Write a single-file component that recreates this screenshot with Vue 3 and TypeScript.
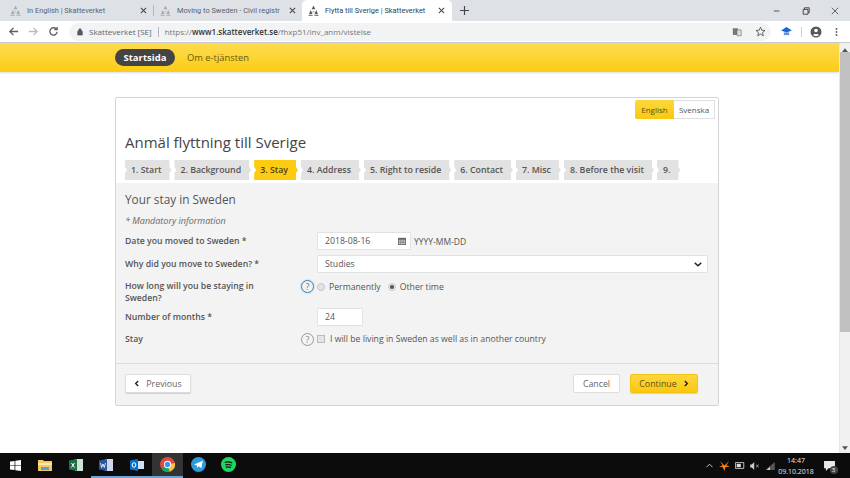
<script setup lang="ts">
interface Tab { title: string; active?: boolean }
const tabs: Tab[] = [
  { title: 'In English | Skatteverket' },
  { title: 'Moving to Sweden - Civil registr' },
  { title: 'Flytta till Sverige | Skatteverket', active: true },
]
const steps = ['1. Start', '2. Background', '3. Stay', '4. Address', '5. Right to reside', '6. Contact', '7. Misc', '8. Before the visit', '9.']
</script>

<template>
  <div class="screen">
    <div class="tabstrip">
      <div v-for="t in tabs" :key="t.title" class="tab" :class="{ active: t.active }">
        <svg class="fav" viewBox="0 0 12 12" width="11" height="11" :fill="t.active ? '#5f5a50' : '#a9a9a9'"><path d="M6 .5 8 4.500H4zM3 5.500 5 10H1zM9 5.500 11 10H7z"/><path d="M.5 10.800h4.500v1H.5zM7 10.800h4.500v1H7zM5 7h2v1H5z"/></svg>
        <span class="tab-title">{{ t.title }}</span>
        <svg class="tab-x" viewBox="0 0 8 8" width="7" height="7"><path d="M1 1l6 6M7 1 1 7" stroke="#45474a" stroke-width="1.200"/></svg>
      </div>
      <svg class="plus" viewBox="0 0 10 10" width="9" height="9"><path d="M5 0v10M0 5h10" stroke="#45474a" stroke-width="1.300"/></svg>
      <div class="winctl">
        <svg viewBox="0 0 10 10" width="8" height="8"><path d="M1 5h7" stroke="#444" stroke-width="1.100"/></svg>
        <svg viewBox="0 0 10 10" width="8" height="8"><path d="M1.500 3h6v6h-6zM3 3V1h6v6H7.500" fill="none" stroke="#444" stroke-width="1.200"/></svg>
        <svg viewBox="0 0 10 10" width="8" height="8"><path d="M1 1l8 8M9 1 1 9" stroke="#444" stroke-width="1"/></svg>
      </div>
    </div>

    <div class="toolbar">
      <svg viewBox="0 0 12 12" width="11" height="11"><path d="M11 6H2M6 2 2 6l4 4" fill="none" stroke="#5b5e62" stroke-width="1.400"/></svg>
      <svg viewBox="0 0 12 12" width="11" height="11"><path d="M1 6h9M6 2l4 4-4 4" fill="none" stroke="#b9bcc0" stroke-width="1.400"/></svg>
      <svg viewBox="0 0 12 12" width="11" height="11"><path d="M10 6.500A4 4 0 1 1 9 3.200M10 1v3H7" fill="none" stroke="#5b5e62" stroke-width="1.400"/></svg>
      <div class="omnibox">
        <svg viewBox="0 0 8 10" width="6" height="8"><path d="M1 4h6v5H1zM2.300 4V2.500a1.700 1.700 0 0 1 3.400 0V4" fill="#55585c" stroke="#55585c"/></svg>
        <span class="site">Skatteverket [SE]</span>
        <span class="sep"></span>
        <span class="url"><span class="dim">https://</span><b>www1.skatteverket.se</b><span class="dim">/fhxp51/inv_anm/vistelse</span></span>
        <span class="spacer"></span>
        <svg class="translate" viewBox="0 0 12 12" width="10" height="10"><path d="M1 1.500h6v8H1z" fill="#777"/><path d="M6 3.500h5v7H6z" fill="#ddd" stroke="#777" stroke-width=".8"/></svg>
        <svg class="star" viewBox="0 0 12 12" width="11" height="11"><path d="M6 1.300 7.400 4.600l3.500.3-2.700 2.300.8 3.500L6 8.800 3 10.700l.8-3.500L1.100 4.900l3.500-.3z" fill="none" stroke="#55585c"/></svg>
      </div>
      <svg class="ext" viewBox="0 0 12 10" width="11" height="9"><path d="M6 0 12 4 6 6 0 4z" fill="#1b66d1"/><path d="M3 6h6v3H3z" fill="#5b95e8"/></svg>
      <span class="tool-sep"></span>
      <svg viewBox="0 0 12 12" width="12" height="12"><circle cx="6" cy="6" r="5.500" fill="#55585c"/><circle cx="6" cy="4.500" r="1.800" fill="#fff"/><path d="M2.800 9c1-1.500 5.400-1.500 6.400 0-1.400 1.500-5 1.500-6.400 0z" fill="#fff"/></svg>
      <svg class="dots" viewBox="0 0 4 12" width="3" height="10"><circle cx="2" cy="2" r="1.200" fill="#55585c"/><circle cx="2" cy="6" r="1.200" fill="#55585c"/><circle cx="2" cy="10" r="1.200" fill="#55585c"/></svg>
    </div>

    <div class="viewport">
      <div class="page">
        <nav class="band">
          <span class="home">Startsida</span>
          <span class="about">Om e-tjänsten</span>
        </nav>

        <main class="card">
          <div class="card-top">
            <div class="lang">
              <span class="lang-on">English</span>
              <span class="lang-off">Svenska</span>
            </div>
            <h1>Anmäl flyttning till Sverige</h1>
            <ol class="steps">
              <li v-for="(s, i) in steps" :key="s" class="step" :class="{ current: i === 2 }">{{ s }}</li>
            </ol>
          </div>

          <section class="body">
            <h2>Your stay in Sweden</h2>
            <p class="mandatory">* Mandatory information</p>

            <div class="row r-date">
              <label>Date you moved to Sweden *</label>
              <span></span>
              <div class="ctl">
                <div class="input date">
                  <span>2018-08-16</span>
                  <svg viewBox="0 0 10 10" width="8" height="8"><path d="M0 1h10v9H0z" fill="#666"/><path d="M1 3.500h8v5.500H1z" fill="#cfcfcf"/><path d="M1 5.200h8M1 7h8M3.500 3.500V9M6.500 3.500V9" stroke="#666" stroke-width=".6"/></svg>
                </div>
                <span class="hint">YYYY-MM-DD</span>
              </div>
            </div>

            <div class="row r-why">
              <label>Why did you move to Sweden? *</label>
              <span></span>
              <div class="ctl">
                <div class="input select">
                  <span>Studies</span>
                  <svg viewBox="0 0 10 6" width="8" height="5"><path d="M1 1l4 3.500L9 1" fill="none" stroke="#222" stroke-width="1.800"/></svg>
                </div>
              </div>
            </div>

            <div class="row r-long">
              <label>How long will you be staying in Sweden?</label>
              <span class="help blue">?</span>
              <div class="ctl choices">
                <span class="radio"></span><span class="opt">Permanently</span>
                <span class="radio on"></span><span>Other time</span>
              </div>
            </div>

            <div class="row r-months">
              <label>Number of months *</label>
              <span></span>
              <div class="ctl"><div class="input months"><span>24</span></div></div>
            </div>

            <div class="row r-stay">
              <label>Stay</label>
              <span class="help">?</span>
              <div class="ctl choices">
                <span class="check"></span><span>I will be living in Sweden as well as in another country</span>
              </div>
            </div>

            <footer class="actions">
              <button class="btn prev">
                <svg viewBox="0 0 6 8" width="5" height="7"><path d="M5 1 2 4l3 3" fill="none" stroke="#222" stroke-width="1.700"/></svg>
                Previous
              </button>
              <span class="spacer"></span>
              <button class="btn cancel">Cancel</button>
              <button class="btn next">
                Continue
                <svg viewBox="0 0 6 8" width="5" height="7"><path d="M1 1l3 3-3 3" fill="none" stroke="#222" stroke-width="1.700"/></svg>
              </button>
            </footer>
          </section>
        </main>
      </div>
      <div class="scrollbar">
        <svg viewBox="0 0 8 5" width="6" height="4"><path d="M0 5 4 0l4 5z" fill="#555"/></svg>
        <div class="thumb"></div>
        <span class="spacer"></span>
        <svg viewBox="0 0 8 5" width="6" height="4"><path d="M0 0 4 5l4-5z" fill="#555"/></svg>
      </div>
    </div>

    <div class="taskbar">
      <svg class="win" viewBox="0 0 12 12" width="11" height="11"><path d="M0 1.700 5 1v4.600H0zM5.800.9 12 0v5.600H5.800zM0 6.400h5V11L0 10.300zM5.800 6.400H12V12l-6.200-.9z" fill="#fff"/></svg>
      <div class="tb-app"><svg viewBox="0 0 14 12" width="14" height="12"><path d="M0 1h5l1 1h8v10H0z" fill="#f5c95d"/><path d="M0 4h14v2H0z" fill="#fbe8a6"/><path d="M3 8h8v3H3z" fill="#4aa3df"/></svg></div>
      <div class="tb-app"><svg viewBox="0 0 14 14" width="14" height="14"><path d="M6 1h8v12H6z" fill="#cfe3d6"/><path d="M0 2.500 8 1v12L0 11.500z" fill="#1d7145"/><path d="M2.500 5l3 4.500M5.500 5l-3 4.500" stroke="#fff"/></svg></div>
      <div class="tb-app open"><svg viewBox="0 0 14 14" width="14" height="14"><path d="M6 1h8v12H6z" fill="#cdd8ee"/><path d="M0 2.500 8 1v12L0 11.500z" fill="#2b579a"/><path d="M1.500 5l1.200 4.500L4 6l1.300 3.500L6.500 5" stroke="#fff" stroke-width=".8" fill="none"/></svg></div>
      <div class="tb-app open"><svg viewBox="0 0 14 14" width="14" height="14"><path d="M5 3h9v8H5z" fill="#cde3f5"/><path d="M0 2.500 8 1v12L0 11.500z" fill="#0a72c6"/><ellipse cx="4" cy="7" rx="1.800" ry="2.300" fill="none" stroke="#fff"/></svg></div>
      <div class="tb-app open active"><svg viewBox="0 0 14 14" width="15" height="15"><circle cx="7" cy="7" r="7" fill="#dd4b3e"/><path d="M7 7 1.500 11A7 7 0 0 0 9 13.700z" fill="#1aa260"/><path d="M7 7 14 5.500A7 7 0 0 1 9 13.700z" fill="#f5c338"/><circle cx="7" cy="7" r="3.400" fill="#fff"/><circle cx="7" cy="7" r="2.500" fill="#4b8cf2"/></svg></div>
      <div class="tb-app"><svg viewBox="0 0 14 14" width="15" height="15"><circle cx="7" cy="7" r="7" fill="#2f9bd8"/><path d="M2.800 7 11 3.600 9.700 10.600 7 8.700 5.700 10 5.400 8z" fill="#fff"/></svg></div>
      <div class="tb-app"><svg viewBox="0 0 14 14" width="15" height="15"><circle cx="7" cy="7" r="7" fill="#1ed760"/><path d="M3.500 5c2.500-.7 5-.5 7 .7M4 7.300c2-.5 4-.4 6 .6M4.500 9.400c1.700-.4 3.300-.3 4.800.5" fill="none" stroke="#111" stroke-width="1.100"/></svg></div>
      <span class="spacer"></span>
      <div class="tray">
        <span class="tray-i"><svg viewBox="0 0 8 5" width="7" height="5"><path d="M.5 4.500 4 1l3.500 3.500" fill="none" stroke="#ddd"/></svg></span>
        <span class="tray-i"><svg viewBox="0 0 12 12" width="11" height="11"><path d="M6 6 1 1l3 5-4 1 4 1 2 4 1-4 5-1-4-1 3-5z" fill="#f5821f"/></svg></span>
        <span class="tray-i"><svg viewBox="0 0 12 8" width="10" height="7"><path d="M.5.500h10v7H.5z" fill="none" stroke="#ddd"/><path d="M2 2h5v4H2z" fill="#ddd"/></svg></span>
        <span class="tray-i"><svg viewBox="0 0 12 10" width="10" height="8"><path d="M0 3h2l3-3v10L2 7H0z" fill="#ccc"/><path d="M7.500 3.500l3 3M10.500 3.500l-3 3" stroke="#ccc"/></svg></span>
        <span class="tray-i"><svg viewBox="0 0 12 10" width="10" height="8"><path d="M12 0v10H0z" fill="#555"/><path d="M6 6v4H2z" fill="#ccc"/></svg></span>
        <div class="clock"><span>14:47</span><span>09.10.2018</span></div>
        <div class="notify">
          <svg viewBox="0 0 12 11" width="11" height="10"><path d="M0 0h12v8H5L2 11V8H0z" fill="#e8e8e8"/></svg>
          <span class="badge">3</span>
        </div>
      </div>
    </div>
  </div>
</template>

<style>
html, body { margin: 0; padding: 0; background: #fff; overflow: hidden; }
</style>

<style scoped>
.screen { width: 850px; height: 478px; display: flex; flex-direction: column; overflow: hidden; font-family: "Open Sans", "Liberation Sans", sans-serif; color: #555; }
.spacer { flex: 1; }

.tabstrip { height: 21px; background: #dee1e6; display: flex; align-items: center; padding-left: 5px; flex: none; }
.tab { width: 148px; height: 21px; box-sizing: border-box; padding: 0 6px 0 5px; display: flex; align-items: center; gap: 6px; font-family: Roboto, "Open Sans", sans-serif; font-size: 7.400px; color: #5f6368; }
.tab:nth-child(2) { width: 149px; position: relative; padding-left: 7px; }
.tab:nth-child(2)::before { content: ""; position: absolute; left: 0; top: 5px; width: 1px; height: 11px; background: #b3b6bb; }
.tab.active { background: #fff; color: #3c4043; border-radius: 5px 5px 0 0; width: 150px; padding-right: 7px; padding-left: 6px; }
.tab-title { flex: 1; white-space: nowrap; }
.plus { margin-left: 8px; }
.winctl { margin-left: auto; display: flex; gap: 21px; padding-right: 11px; }

.toolbar { height: 22px; flex: none; background: #fff; border-bottom: 1px solid #c9cbcf; box-sizing: border-box; display: flex; align-items: center; padding: 0 6px 0 8px; }
.toolbar > svg:nth-child(2) { margin-left: 9px; }
.toolbar > svg:nth-child(3) { margin-left: 9px; }
.omnibox { margin-left: 10px; width: 702px; height: 18px; border-radius: 9px; background: #f1f3f4; display: flex; align-items: center; padding: 0 5px 0 8px; box-sizing: border-box; font-size: 8px; color: #3c4043; flex: none; }
.site { margin-left: 6px; color: #5f6368; }
.sep { width: 1px; height: 10px; background: #b5b7ba; margin: 0 6px; }
.dim { color: #777; }
.url b { font-weight: 600; color: #333; }
.translate { margin-right: 13px; }
.ext { margin-left: 10px; }
.tool-sep { width: 1px; height: 10px; background: #d0d2d5; margin: 0 8px 0 9px; }
.dots { margin-left: 13px; }

.viewport { flex: 1; display: flex; min-height: 0; overflow: hidden; }
.page { flex: 1; min-width: 0; background: #fff; }
.scrollbar { width: 10px; background: #f1f1f1; border-left: 1px solid #e8e8e8; box-sizing: content-box; display: flex; flex-direction: column; align-items: center; padding: 5px 0 3px; }
.thumb { width: 10px; height: 280px; margin-top: 0; background: #c1c1c1; }

.band { height: 29px; background: linear-gradient(#fedb50, #fbcd14); display: flex; align-items: center; padding-left: 115px; box-shadow: 0 1px 2px rgba(0,0,0,.15); }
.home { background: #444; color: #fff; font-weight: 700; border-radius: 9px; padding: 2px 8.500px; line-height: 13px; font-size: 9.500px; margin-top: -1px; }
.about { margin-left: 12px; color: #6b5a10; font-size: 9.400px; margin-top: -1px; }

.card { width: 604px; height: 309px; box-sizing: border-box; margin: 25px 0 0 115px; border: 1px solid #d5d5d5; border-radius: 2px; display: flex; flex-direction: column; background: #fff; }
.card-top { height: 85px; flex: none; position: relative; padding: 33px 0 0 9px; box-sizing: border-box; }
.lang { position: absolute; top: 2px; right: 3px; display: flex; font-size: 8px; height: 19px; line-height: 19px; }
.lang-on { width: 39px; text-align: center; background: linear-gradient(#fdd73f, #fbc80f); color: #5c4d10; border-radius: 2px 0 0 2px; }
.lang-off { width: 41px; box-sizing: border-box; text-align: center; border: 1px solid #e0e0e0; border-left: 0; line-height: 17px; color: #555; }
h1 { margin: 0; font-size: 15px; font-weight: 400; line-height: 22px; color: #444; }
.steps { list-style: none; margin: 7px 0 0; padding: 0; display: flex; gap: 3px; }
.step { height: 20px; line-height: 20px; padding: 0 10px 0 6px; font-size: 8.800px; font-weight: 600; color: #555; background: #e2e2e2; white-space: nowrap; clip-path: polygon(0 0, calc(100% - 2px) 0, calc(100% - 2px) 35%, 100% 50%, calc(100% - 2px) 65%, calc(100% - 2px) 100%, 0 100%, 0 65%, 2px 50%, 0 35%); }
.step.current { background: #fdcb12; color: #4a3f10; }

.body { flex: 1; background: #f3f3f3; padding: 0 0 0 9px; display: flex; flex-direction: column; font-size: 8.700px; }
h2 { margin: 8px 0 0; font-size: 11.800px; font-weight: 400; line-height: 16px; color: #555; }
.mandatory { margin: 7px 0 0; font-style: italic; font-size: 9px; line-height: 13px; color: #666; }
.row { display: grid; grid-template-columns: 176px 16px 1fr; align-items: center; padding-right: 10px; }
.row label { font-weight: 600; line-height: 12px; font-size: 8.700px; color: #555; padding-right: 10px; }
.r-date { margin-top: 5px; height: 18px; }
.r-why { margin-top: 5px; height: 18px; }
.r-long { margin-top: 7px; height: 26px; align-items: start; }
.r-months { margin-top: 2px; height: 18px; }
.r-stay { margin-top: 4px; height: 18px; }
.ctl { display: flex; align-items: center; }
.input { background: #fff; border: 1px solid #e2e2e2; box-sizing: border-box; height: 18px; display: flex; align-items: center; padding: 0 7px; border-radius: 1px; }
.date { width: 94px; justify-content: space-between; padding-right: 4px; }
.hint { margin-left: 3px; font-size: 8.500px; }
.select { width: 391px; justify-content: space-between; padding-right: 5px; }
.months { width: 46px; }
.help { width: 13px; height: 13px; box-sizing: border-box; border: 1px solid #999; border-radius: 50%; font-size: 9px; line-height: 11px; text-align: center; color: #888; }
.help.blue { border-color: #2f86c2; color: #2f86c2; box-shadow: 0 0 2px rgba(47,134,194,.5); }
.choices { gap: 4px; height: 13px; }
.opt { margin-right: 3px; }
.radio { width: 8px; height: 8px; border: 1px solid #c4c4c4; border-radius: 50%; background: #e4e4e4; box-sizing: border-box; }
.radio.on { background: radial-gradient(circle, #555 0 1.500px, #eee 2.500px); }
.check { width: 8px; height: 8px; border: 1px solid #bbb; background: #e4e4e4; box-sizing: border-box; margin-right: 1px; }

.actions { margin: auto 0 0 -9px; height: 42px; box-sizing: border-box; border-top: 1px solid #dcdcdc; display: flex; align-items: center; padding: 0 20px 2px 9px; gap: 10px; }
.btn { font-family: inherit; font-size: 8.800px; height: 19px; box-sizing: border-box; border: 1px solid #ddd; background: #fff; color: #666; border-radius: 2px; padding: 0; display: flex; align-items: center; justify-content: center; gap: 7px; box-shadow: 0 1px 1px rgba(0,0,0,.15); }
.prev { width: 66px; }
.cancel { width: 47px; box-shadow: none; }
.next { width: 68px; background: linear-gradient(#fdd73f, #fbc80f); border-color: #f3c414; color: #5c4d10; }

.taskbar { height: 25px; flex: none; background: #0c0c0c; display: flex; align-items: stretch; color: #ddd; }
.win { margin: 7px 9px 0 10px; }
.tb-app { width: 30.600px; display: flex; align-items: center; justify-content: center; box-sizing: border-box; border-bottom: 2px solid transparent; }
.tb-app.open { border-bottom-color: #6aa5d8; }
.tb-app.active { background: #333; }
.tray { display: flex; align-items: center; padding-right: 15.500px; }
.tray-i { width: 15px; display: flex; justify-content: center; }
.clock { display: flex; flex-direction: column; align-items: center; font-size: 7px; line-height: 11px; color: #e4e4e4; width: 38px; }
.notify { position: relative; margin-left: 8.500px; display: flex; }
.badge { position: absolute; right: -3px; bottom: -3px; width: 8px; height: 8px; background: #444; color: #fff; border-radius: 50%; font-size: 6px; line-height: 8px; text-align: center; }
</style>
